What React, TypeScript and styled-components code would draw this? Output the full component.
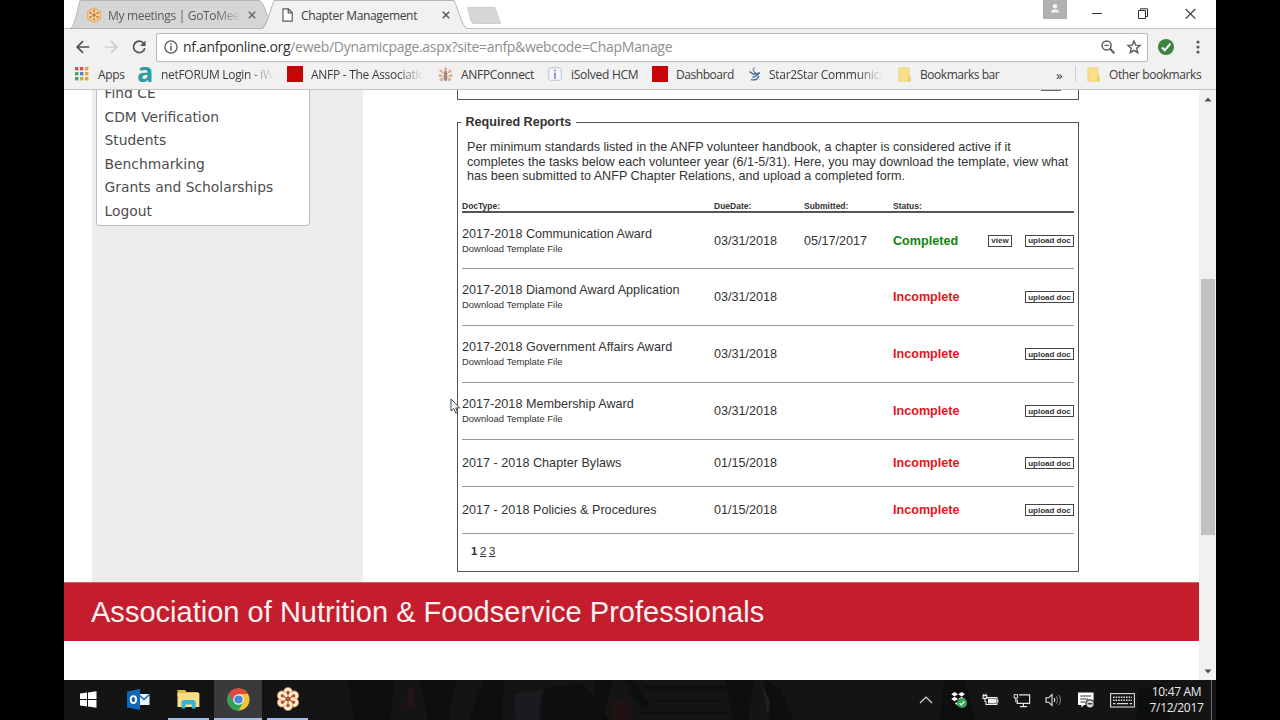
import React from 'react';
import styled, { createGlobalStyle, css } from 'styled-components';

const Global = createGlobalStyle`
  * { box-sizing: border-box; }
  body { margin: 0; background: #000; overflow: hidden; }
  svg { display: block; flex: none; }
`;

const ui = `'Open Sans', 'Noto Sans', sans-serif`;
const arial = `'Liberation Sans', Arial, sans-serif`;

const Desktop = styled.div`
  position: relative;
  width: 1152px;
  height: 720px;
  margin: 0 64px;
  background: #fff;
  display: flex;
  flex-direction: column;
  overflow: hidden;
`;

/* ---------- Browser frame ---------- */

const TabStrip = styled.header`
  height: 29px;
  flex: none;
  display: flex;
  padding-left: 6px;
  background: linear-gradient(#c4c4c4, #c4c4c4) bottom / 100% 1px no-repeat #fff;
`;

const TabShell = styled.div<{ $w: number; $overlap?: number; $front?: boolean }>`
  position: relative;
  width: ${p => p.$w}px;
  height: 29px;
  flex: none;
  margin-left: ${p => -(p.$overlap ?? 0)}px;
  z-index: ${p => (p.$front ? 2 : 1)};
`;

const TabShape = styled.svg`
  position: absolute;
  inset: 0;
`;

const TabBody = styled.div<{ $left: number; $gap: number }>`
  position: relative;
  height: 30px;
  display: flex;
  align-items: center;
  padding-left: ${p => p.$left}px;
  gap: ${p => p.$gap}px;
`;

const Label = styled.span<{ $size: number; $track?: number; $w?: number; $fade?: boolean; $color?: string }>`
  font: ${p => p.$size}px/20px ${ui};
  letter-spacing: ${p => p.$track ?? 0}px;
  color: ${p => p.$color ?? '#3c3c3c'};
  white-space: nowrap;
  flex: none;
  padding-top: 1px;
  ${p => p.$w && css`width: ${p.$w}px; overflow: hidden;`}
  ${p => p.$fade && css`mask-image: linear-gradient(90deg, #000 calc(100% - 26px), transparent);`}
`;

const NewTab = styled.svg`
  margin: 7px 0 0 -2px;
`;

const WindowControls = styled.div`
  margin-left: auto;
  display: flex;
  align-items: flex-start;
`;

const Profile = styled.div`
  width: 24px;
  height: 19px;
  background: #b1b1b1;
  display: flex;
  justify-content: center;
  margin-right: 25px;
`;

const ControlIcon = styled.svg<{ $mr: number }>`
  margin: 7px ${p => p.$mr}px 0 0;
`;

const Toolbar = styled.div`
  height: 33px;
  flex: none;
  background: #f1f1f1;
  display: flex;
  align-items: center;
  padding: 3px 0 0 11px;
`;

const NavIcons = styled.div`
  display: flex;
  gap: 12px;
  width: 81px;
`;

const Omnibox = styled.div`
  width: 992px;
  height: 29px;
  border: 1px solid #b9b9b9;
  border-radius: 2px;
  background: #fff;
  display: flex;
  align-items: center;
  padding: 0 5px 0 6px;
`;

const Url = styled.div`
  font: 14px/26px ${ui};
  letter-spacing: -0.31px;
  color: #8e8e8e;
  margin-left: 4px;
  flex: 1;
  white-space: nowrap;
`;

const UrlHost = styled.span`
  color: #2f2f2f;
`;

const OmniIcons = styled.div`
  display: flex;
  gap: 10px;
`;

const ToolbarActions = styled.div`
  display: flex;
  align-items: center;
  gap: 22px;
  margin-left: 10px;
`;

const Bookmarks = styled.nav`
  height: 28px;
  flex: none;
  background: #f1f1f1;
  border-bottom: 1px solid #c2c2c2;
  display: grid;
  grid-template-columns: 62px 150px 151px 110px 104px 97px 149px 158px 19px 12px 120px;
  padding: 0 0 3px 11px;
  align-items: center;
`;

const Bookmark = styled.div`
  display: flex;
  align-items: center;
  height: 24px;
`;

const BookmarkIcon = styled.span<{ $w: number }>`
  width: ${p => p.$w}px;
  flex: none;
`;

const BarDivider = styled.span`
  width: 1px;
  height: 16px;
  background: #cfcfcf;
`;

/* ---------- Web page ---------- */

const Viewport = styled.div`
  height: 590px;
  flex: none;
  display: flex;
`;

const Page = styled.div`
  width: 1135px;
  display: flex;
  flex-direction: column;
`;

const Columns = styled.div`
  height: 492px;
  display: flex;
  padding-left: 28px;
`;

const Sidebar = styled.aside`
  width: 271px;
  background: #ededed;
  padding-left: 4px;
`;

const SideMenu = styled.ul`
  list-style: none;
  margin: 0;
  width: 214px;
  height: 136px;
  overflow: hidden;
  background: #fff;
  border: 1px solid #bdbdbd;
  border-top: 0;
  border-radius: 0 0 4px 4px;
  padding: 0 0 0 7.5px;
`;

const SideItem = styled.li`
  font: 13.85px/23.6px 'DejaVu Sans', Verdana, sans-serif;
  color: #4c4c4c;
  white-space: nowrap;
  &:first-child { margin-top: -8px; }
`;

const Main = styled.main`
  width: 622px;
  margin-left: 94px;
  font-family: ${arial};
  color: #333;
`;

const PreviousPanel = styled.section`
  height: 10px;
  border: 1px solid #555;
  border-top: 0;
  display: flex;
  justify-content: flex-end;
  padding-right: 17px;
  margin-bottom: 22px;
`;

const CutButton = styled.span`
  width: 20px;
  height: 1px;
  background: #666;
`;

const Panel = styled.section`
  height: 450px;
  border: 1px solid #555;
  padding: 0 4px;
`;

const Legend = styled.h2`
  width: 115px;
  height: 16px;
  margin: -9px 0 0 -1px;
  padding-left: 4.5px;
  background: #fff;
  font: bold 12.6px/17px ${arial};
  white-space: nowrap;
`;

const Intro = styled.p`
  margin: 10px 0 16.5px 5px;
  font-size: 12.6px;
  line-height: 14.5px;
`;

const IntroLine = styled.span`
  display: block;
  white-space: nowrap;
`;

const gridColumns = css`
  display: grid;
  grid-template-columns: 252px 90px 89px 95px 37px 49px;
`;

const HeadRow = styled.div`
  ${gridColumns}
  height: 13px;
  border-bottom: 2px solid #555;
  font: bold 8.5px/13px ${arial};
`;

const Row = styled.div<{ $h: number }>`
  ${gridColumns}
  height: ${p => p.$h}px;
  border-bottom: 1px solid #999;
  align-items: center;
  font-size: 12.6px;
`;

const DocTitle = styled.div`
  line-height: 16px;
  letter-spacing: 0.02px;
  white-space: nowrap;
`;

const Template = styled.div`
  font-size: 9.45px;
  line-height: 14px;
`;

const Status = styled.strong<{ $done: boolean }>`
  color: ${p => (p.$done ? '#0b870b' : '#e8141c')};
`;

const ViewCell = styled.div`
  display: flex;
`;

const SmallButton = styled.button<{ $w: number }>`
  width: ${p => p.$w}px;
  height: 12px;
  padding: 0;
  border: 1px solid #444;
  background: #fff;
  color: #333;
  font: bold 8px/9px ${arial};
  white-space: nowrap;
`;

const Pager = styled.div`
  display: flex;
  gap: 2.7px;
  padding: 10px 0 0 9px;
  font-size: 11.4px;
  line-height: 15px;
`;

const PageLink = styled.span`
  text-decoration: underline;
`;

const Banner = styled.footer`
  height: 59px;
  background: #c41e2e;
  border-top: 1px solid #d0606c;
  padding-left: 27px;
  font: 29px/59px ${arial};
  letter-spacing: 0.02px;
  color: #fdf1f1;
  white-space: nowrap;
`;

const ScrollTrack = styled.div`
  width: 17px;
  background: #f1f1f1;
  display: flex;
  flex-direction: column;
  align-items: center;
  padding: 7px 0 6px;
`;

const Thumb = styled.div`
  width: 14px;
  height: 256px;
  margin: 177px 0 auto;
  background: #c1c1c1;
`;

/* ---------- Taskbar ---------- */

const Taskbar = styled.div`
  height: 40px;
  flex: none;
  display: flex;
  position: relative;
  background: #131413;
`;

const Wallpaper = styled.svg`
  position: absolute;
  inset: 0;
`;

const TaskButton = styled.div<{ $w: number; $active?: boolean; $open?: boolean; $mr?: number }>`
  position: relative;
  width: ${p => p.$w}px;
  height: 40px;
  margin-right: ${p => p.$mr ?? 0}px;
  display: flex;
  align-items: center;
  justify-content: center;
  background: ${p => (p.$active ? '#3a3a3a' : 'transparent')};
  border-bottom: ${p => (p.$active || p.$open ? '2px solid #a6bce8' : '2px solid transparent')};
`;

const Tray = styled.div`
  position: relative;
  margin-left: auto;
  height: 40px;
  display: grid;
  grid-template-columns: 33px 33px 31px 31px 33px 31px 42px 67px 6px;
  align-items: center;
  justify-items: center;
`;

const Clock = styled.div`
  font: 12px/16px ${ui};
  letter-spacing: -0.32px;
  color: #ececec;
  text-align: center;
  white-space: nowrap;
  padding-bottom: 1px;
`;

const ShowDesktop = styled.span`
  width: 1px;
  height: 40px;
  background: #6a6a6a;
  justify-self: start;
  margin-left: 1px;
`;

const Cursor = styled.svg`
  position: absolute;
  left: 386px;
  top: 398px;
`;

/* ---------- Icons ---------- */

const petals = [0, 60, 120, 180, 240, 300];

const GoToIcon = ({ size, bright }: { size: number; bright?: boolean }) => (
  <svg width={size} height={size} viewBox="0 0 24 24">
    {bright ? (
      <g fill="#fff3dc" stroke="#d9763a" strokeWidth="0.8">
        {petals.map(a => <circle key={a} cx="12" cy="5" r="4.6" transform={`rotate(${a} 12 12)`} />)}
      </g>
    ) : (
      <path d="M12 1.2 21.5 6.6V17.4L12 22.8 2.5 17.4V6.6Z" fill="#f6dcae" stroke="#e6ac68" strokeWidth="2" strokeLinejoin="round" />
    )}
    <circle cx="12" cy="12" r="7" fill={bright ? '#fff3dc' : '#f6dcae'} />
    <g fill={bright ? '#b5521f' : '#cf8046'} stroke={bright ? '#b5521f' : '#cf8046'}>
      {petals.map(a => (
        <g key={a} transform={`rotate(${a} 12 12)`}>
          <path d="M12 12V6.5" strokeWidth="1" />
          <circle cx="12" cy="5.6" r="1.5" strokeWidth="0.6" />
        </g>
      ))}
      <circle cx="12" cy="12" r="2" />
    </g>
  </svg>
);

const Close = ({ color }: { color: string }) => (
  <svg width="8" height="8" viewBox="0 0 8 8" stroke={color} strokeWidth="1.4"><path d="M.8.8 7.2 7.2M7.2.8.8 7.2" /></svg>
);

const FileIcon = () => (
  <svg width="11" height="14" viewBox="0 0 11 14" fill="#fff" stroke="#5c5c5c" strokeWidth="1.2"><path d="M1 .8H6.4L10.2 4.6V13.2H1ZM6.2 1V4.8H10" /></svg>
);

const Back = ({ color, flip }: { color: string; flip?: boolean }) => (
  <svg width="16" height="16" viewBox="0 0 16 16" fill="none" stroke={color} strokeWidth="1.7">
    <path d="M14.3 8H2.5M8 2.2 2.2 8 8 13.8" transform={flip ? 'matrix(-1 0 0 1 16 0)' : undefined} />
  </svg>
);

const Reload = () => (
  <svg width="16" height="16" viewBox="0 0 16 16" fill="none" stroke="#555" strokeWidth="1.7">
    <path d="M12.7 4.4A5.7 5.7 0 1 0 13.8 9" /><path d="M14.6 1.4V7H9Z" fill="#555" stroke="none" />
  </svg>
);

const Info = () => (
  <svg width="16" height="16" viewBox="0 0 16 16" fill="none" stroke="#5a5a5a" strokeWidth="1.3">
    <circle cx="8" cy="8" r="6.1" /><path d="M8 7V11.6M8 4.3V5.8" strokeWidth="1.5" />
  </svg>
);

const ZoomOut = () => (
  <svg width="16" height="16" viewBox="0 0 16 16" fill="none" stroke="#5a5a5a" strokeWidth="1.5">
    <circle cx="6.6" cy="6.4" r="4.5" /><path d="M10 9.8 14.3 14.2" strokeWidth="2" /><path d="M4.4 6.4H8.8" strokeWidth="1.2" />
  </svg>
);

const Star = () => (
  <svg width="16" height="16" viewBox="0 0 16 16" fill="none" stroke="#5a5a5a" strokeWidth="1.4">
    <path d="M8 2 9.7 6.1 14.1 6.4 10.7 9.3 11.8 13.7 8 11.3 4.2 13.7 5.3 9.3 1.9 6.4 6.3 6.1Z" />
  </svg>
);

const CheckBadge = () => (
  <svg width="16" height="16" viewBox="0 0 16 16">
    <circle cx="8" cy="8" r="8" fill="#3b8440" />
    <path d="M4 8.6 6.8 11.3 12.4 4.6" fill="none" stroke="#fff" strokeWidth="2.1" />
  </svg>
);

const Dots = () => (
  <svg width="4" height="14" viewBox="0 0 4 14" fill="#5a5a5a"><circle cx="2" cy="2" r="1.6" /><circle cx="2" cy="7" r="1.6" /><circle cx="2" cy="12" r="1.6" /></svg>
);

const appColors = ['#d9534a', '#d9534a', '#dca83a', '#4aa564', '#5b7fd0', '#dca83a', '#4aa564', '#dca83a', '#dca83a'];
const AppsIcon = () => (
  <svg width="14" height="14" viewBox="0 0 14 14">
    {appColors.map((c, i) => <rect key={i} x={(i % 3) * 5} y={Math.floor(i / 3) * 5} width="3.4" height="3.4" fill={c} />)}
  </svg>
);

const LetterA = styled.span`
  display: block;
  width: 15px;
  height: 20px;
  font: bold 27px/16px 'Open Sans', sans-serif;
  color: #2a9da3;
`;

const RedSquare = styled.span`
  display: block;
  width: 16px;
  height: 16px;
  background: #c80408;
`;

const ConnectIcon = () => (
  <svg width="15" height="15" viewBox="0 0 15 15">
    <g fill="#e9b08e">
      <circle cx="3" cy="4" r="1.6" /><circle cx="12" cy="4" r="1.6" /><circle cx="2" cy="8.5" r="1.6" /><circle cx="13" cy="8.5" r="1.6" />
      <circle cx="3.5" cy="12.5" r="1.8" /><circle cx="11.5" cy="12.5" r="1.8" /><circle cx="7.5" cy="2" r="1.7" />
    </g>
    <path d="M3 4.5 7.5 8 12 4.5M2 9H13M4 12.5 7.5 9 11 12.5" stroke="#c9a592" fill="none" />
    <rect x="6" y="3.5" width="3" height="10.5" rx="1.5" fill="#a5857a" />
  </svg>
);

const ISolvedIcon = () => (
  <svg width="14" height="14" viewBox="0 0 14 14" fill="none" stroke="#b6c6dc" strokeWidth="1">
    <rect x=".7" y=".7" width="12.6" height="12.6" rx="2" fill="#f5f7fa" /><path d="M7 5.6V12M7 2.6V4.3" stroke="#6d87ad" strokeWidth="1.5" />
  </svg>
);

const Star2StarIcon = () => (
  <svg width="12" height="14" viewBox="0 0 12 14" fill="none" stroke="#3d6894" strokeWidth="1.3">
    <path d="M5.6.4C4 1.8 3.8 3.4 5.2 4.6" stroke="#7d9ab8" />
    <path d="M.6 4.6 4.6 7.2 11 6M5 4.6 7.4 7M3.4 10.4C6.8 9.6 8.6 8.6 9.4 6.6M2 12.6C6 13.6 9.4 12.4 9.6 8.6" />
  </svg>
);

const Folder = () => (
  <svg width="13" height="15" viewBox="0 0 13 15"><path d="M.8.8H11.2V9.8H12.4V14.2H.8Z" fill="#fbe08b" stroke="#eecf73" strokeWidth=".8" /><path d="M9.9 10.2H12.2V14H9.9Z" fill="#f2cd62" /></svg>
);

const Arrow = ({ down }: { down?: boolean }) => (
  <svg width="8" height="5" viewBox="0 0 8 5"><path d={down ? 'M.5.5H7.5L4 4.5Z' : 'M.5 4.5H7.5L4 .5Z'} fill="#505050" /></svg>
);

const WindowsIcon = () => (
  <svg width="17" height="17" viewBox="0 0 17 17" fill="#fff"><path d="M0 2.6 7 1.6V8H0ZM8 1.4 16.5.2V8H8ZM0 9H7V15.4L0 14.4ZM8 9H16.5V16.8L8 15.6Z" /></svg>
);

const OutlookIcon = () => (
  <svg width="23" height="21" viewBox="0 0 23 21">
    <rect x="11" y="5" width="11.5" height="11" fill="#e9f1fa" />
    <path d="M12 6 17 10.5 22.5 5.5" fill="none" stroke="#1466b3" strokeWidth="1.5" />
    <path d="M0 2.4 13 0V21L0 18.6Z" fill="#0f68b8" />
    <ellipse cx="6.4" cy="10.6" rx="2.7" ry="3.5" fill="none" stroke="#fff" strokeWidth="1.8" />
  </svg>
);

const ExplorerIcon = () => (
  <svg width="23" height="20" viewBox="0 0 23 20">
    <path d="M.5 1H8L9.5 3H21V7H.5Z" fill="#e3b94f" />
    <path d="M.5 4H22.4V18H.5Z" fill="#fbdf86" />
    <path d="M4.5 19.4V12.6L6.4 11H16.8L18.7 12.6V19.4H14.8V15.4H8.4V19.4Z" fill="#35b4d6" />
  </svg>
);

const ChromeIcon = () => (
  <svg width="23" height="23" viewBox="0 0 24 24">
    <circle cx="12" cy="12" r="11.5" fill="#f3c63a" />
    <path d="M2.04 6.25A11.5 11.5 0 0 0 12 23.5L17 14.9 12 12Z" fill="#2fa257" />
    <path d="M2.04 6.25 7.1 14.9 12 12 12 6.3H21.96A11.5 11.5 0 0 0 2.04 6.25Z" fill="#dd4b3e" />
    <circle cx="12" cy="12" r="5.5" fill="#f4f4f4" /><circle cx="12" cy="12" r="4.3" fill="#4a86e0" />
  </svg>
);

const DropboxIcon = () => (
  <svg width="18" height="18" viewBox="0 0 18 18">
    <path d="M4.6 1 8 3.2 4.6 5.4 1.2 3.2ZM11.6 1 15 3.2 11.6 5.4 8.2 3.2ZM4.6 5.8 8 8 4.6 10.2 1.2 8ZM11.6 5.8 15 8 11.6 10.2 8.2 8ZM8 10.4 11 12.4 8 14.6 4.8 12.4Z" fill="#fff" />
    <circle cx="12" cy="12" r="5" fill="#2fa84f" /><path d="M9.6 12.2 11.4 13.9 14.4 10.4" stroke="#fff" strokeWidth="1.3" fill="none" />
  </svg>
);

const BatteryIcon = () => (
  <svg width="17" height="14" viewBox="0 0 17 14" fill="none" stroke="#eee" strokeWidth="1.1">
    <path d="M5 4.5H15V11.5H4V8" /><path d="M6.5 6H13.6V10H6.5Z" fill="#eee" /><path d="M15.8 6.5V9.5" />
    <path d="M1 2.6H4.8V5.4H1ZM1.8.8V2.6M4 .8V2.6M2.9 5.4V9" />
  </svg>
);

const NetworkIcon = () => (
  <svg width="18" height="15" viewBox="0 0 18 15" fill="none" stroke="#e6e6e6" strokeWidth="1.2">
    <path d="M6 1.8H16.6V10.4H4.2V6.5M10.4 10.4V13.4M7 13.6H14" /><path d="M1.2 1.6H4.6V5H1.2ZM2.8 5V9.2" strokeWidth="1" />
  </svg>
);

const VolumeIcon = () => (
  <svg width="18" height="14" viewBox="0 0 18 14" fill="none" stroke="#e6e6e6" strokeWidth="1.1">
    <path d="M1 4.8H3.6L7 1.6V12.4L3.6 9.2H1Z" /><path d="M9 5C9.8 6 9.8 8 9 9" />
    <path d="M11.2 3.4C12.8 5.4 12.8 8.6 11.2 10.6M13.6 1.8C16.2 4.6 16.2 9.4 13.6 12.2" stroke="#777" />
  </svg>
);

const NoteIcon = () => (
  <svg width="18" height="17" viewBox="0 0 18 17">
    <path d="M1 .6H16.6V13H7L4.4 15.6V13H1Z" fill="#fff" /><path d="M3.4 4H14M3.4 7H11M3.4 10H8.5" stroke="#333" strokeWidth="1.2" />
    <circle cx="13" cy="11.8" r="4.6" fill="#131413" /><circle cx="13" cy="11.8" r="3.6" fill="#d8d8d8" /><path d="M10.6 11.8H15.4" stroke="#222" strokeWidth="1.2" />
  </svg>
);

const KeyboardIcon = () => (
  <svg width="25" height="15" viewBox="0 0 25 15" fill="none" stroke="#dcdcdc" strokeWidth="1.1">
    <rect x=".6" y=".6" width="23.8" height="13.4" />
    <path d="M3 4.2H22M3 7.2H22" strokeDasharray="1.6 1" strokeWidth="1.4" /><path d="M3 10.6H5.4M7 10.6H18M19.6 10.6H22" strokeWidth="1.3" />
  </svg>
);

/* ---------- Content ---------- */

const menu = ['Find CE', 'CDM Verification', 'Students', 'Benchmarking', 'Grants and Scholarships', 'Logout'];

const reports = [
  { title: '2017-2018 Communication Award', template: true, due: '03/31/2018', submitted: '05/17/2017', h: 56 },
  { title: '2017-2018 Diamond Award Application', template: true, due: '03/31/2018', h: 57 },
  { title: '2017-2018 Government Affairs Award', template: true, due: '03/31/2018', h: 57 },
  { title: '2017-2018 Membership Award', template: true, due: '03/31/2018', h: 57 },
  { title: '2017 - 2018 Chapter Bylaws', due: '01/15/2018', h: 47 },
  { title: '2017 - 2018 Policies & Procedures', due: '01/15/2018', h: 47 },
];

interface BookmarkDef { icon: React.ReactNode; slot: number; text: string; w?: number; track?: number }

const bookmarks: BookmarkDef[] = [
  { icon: <AppsIcon />, slot: 23, text: 'Apps', track: -0.3 },
  { icon: <LetterA>a</LetterA>, slot: 24, text: 'netFORUM Login - iWeb', w: 113, track: -0.3 },
  { icon: <RedSquare />, slot: 24, text: 'ANFP - The Association', w: 113, track: -0.28 },
  { icon: <ConnectIcon />, slot: 23, text: 'ANFPConnect', track: -0.3 },
  { icon: <ISolvedIcon />, slot: 23, text: 'iSolved HCM', track: -0.26 },
  { icon: <RedSquare />, slot: 24, text: 'Dashboard', track: -0.45 },
  { icon: <Star2StarIcon />, slot: 20, text: 'Star2Star Communications', w: 114, track: -0.3 },
  { icon: <Folder />, slot: 22, text: 'Bookmarks bar', track: -0.46 },
];

const Chrome = () => (
  <>
    <TabStrip>
      <TabShell $w={200}>
        <TabShape width="200" height="29">
          <path d="M0 28.5C4 27 5 20 10 .5H189C194 2 195 12 199 18L192 28.5Z" fill="#d5d5d5" stroke="#b5b5b5" />
        </TabShape>
        <TabBody $left={16} $gap={6}>
          <GoToIcon size={16} />
          <Label $size={12} $track={-0.32} $w={134} $fade $color="#5a5a5a">My meetings | GoToMeeting</Label>
          <Close color="#666" />
        </TabBody>
      </TabShell>
      <TabShell $w={206} $overlap={8} $front>
        <TabShape width="206" height="29">
          <path d="M0 29C5 27 8 10 12 .5H192C196 8 200 27 205 29Z" fill="#f1f1f1" />
          <path d="M0 28.5C5 27 8 10 12 .5H192C196 8 200 27 205 28.5" fill="none" stroke="#b5b5b5" />
        </TabShape>
        <TabBody $left={20} $gap={8}>
          <FileIcon />
          <Label $size={12} $track={-0.34} $w={133}>Chapter Management</Label>
          <Close color="#555" />
        </TabBody>
      </TabShell>
      <NewTab width="36" height="18"><path d="M1.5.5H29L34.5 16.5H8Q6 16.5 5 14Z" fill="#d6d6d6" stroke="#cdcdcd" /></NewTab>
      <WindowControls>
        <Profile>
          <svg width="12" height="16" viewBox="0 0 12 16" fill="#f4f4f4"><circle cx="6" cy="6.2" r="2.2" /><path d="M1.8 12.4C2 9.8 4 9.4 6 9.4S10 9.8 10.2 12.4Z" /></svg>
        </Profile>
        <ControlIcon $mr={36} width="10" height="14"><path d="M0 6.5H10" stroke="#333" /></ControlIcon>
        <ControlIcon $mr={37} width="10" height="14" fill="none" stroke="#333"><path d="M.5 3.5H7.5V11.5H.5ZM2.5 3.5V1.8H9.5V9.5H7.5" /></ControlIcon>
        <ControlIcon $mr={20} width="11" height="14" stroke="#333" strokeWidth="1.1"><path d="M.7 2 10.3 11.6M10.3 2 .7 11.6" /></ControlIcon>
      </WindowControls>
    </TabStrip>
    <Toolbar>
      <NavIcons><Back color="#505050" /><Back color="#cfcfcf" flip /><Reload /></NavIcons>
      <Omnibox>
        <Info />
        <Url><UrlHost>nf.anfponline.org</UrlHost>/eweb/Dynamicpage.aspx?site=anfp&amp;webcode=ChapManage</Url>
        <OmniIcons><ZoomOut /><Star /></OmniIcons>
      </Omnibox>
      <ToolbarActions><CheckBadge /><Dots /></ToolbarActions>
    </Toolbar>
    <Bookmarks>
      {bookmarks.map(b => (
        <Bookmark key={b.text}>
          <BookmarkIcon $w={b.slot}>{b.icon}</BookmarkIcon>
          <Label $size={12} $track={b.track} $w={b.w} $fade={!!b.w}>{b.text}</Label>
        </Bookmark>
      ))}
      <Label $size={13}>»</Label>
      <BarDivider />
      <Bookmark>
        <BookmarkIcon $w={22}><Folder /></BookmarkIcon>
        <Label $size={12} $track={-0.42}>Other bookmarks</Label>
      </Bookmark>
    </Bookmarks>
  </>
);

const Reports = () => (
  <Panel>
    <Legend>Required Reports</Legend>
    <Intro>
      <IntroLine>Per minimum standards listed in the ANFP volunteer handbook, a chapter is considered active if it</IntroLine>
      <IntroLine>completes the tasks below each volunteer year (6/1-5/31). Here, you may download the template, view what</IntroLine>
      <IntroLine>has been submitted to ANFP Chapter Relations, and upload a completed form.</IntroLine>
    </Intro>
    <HeadRow><span>DocType:</span><span>DueDate:</span><span>Submitted:</span><span>Status:</span></HeadRow>
    {reports.map(r => (
      <Row key={r.title} $h={r.h}>
        <div>
          <DocTitle>{r.title}</DocTitle>
          {r.template && <Template>Download Template File</Template>}
        </div>
        <span>{r.due}</span>
        <span>{r.submitted}</span>
        <Status $done={!!r.submitted}>{r.submitted ? 'Completed' : 'Incomplete'}</Status>
        <ViewCell>{r.submitted && <SmallButton $w={24}>view</SmallButton>}</ViewCell>
        <SmallButton $w={49}>upload doc</SmallButton>
      </Row>
    ))}
    <Pager><b>1</b><PageLink>2</PageLink><PageLink>3</PageLink></Pager>
  </Panel>
);

const Task = () => (
  <Taskbar>
    <Wallpaper width="1152" height="40">
      <g fill="#0d0e0e">
        <path d="M284 0H330L326 40H290Z M356 0H392L384 40H364Z M420 0H440L438 40H405Z M480 8 520 4 545 40H478Z M530 0H548L540 36H532Z M560 0 570 0 586 26 578 28Z M662 0H690L684 40H668Z M700 0 716 8 730 40H705Z M880 0H900L912 40H876Z M1075 10 1096 4 1108 40H1072Z" />
        <path d="M580 6H662V9H580ZM590 20H660V22H590ZM574 32H665V34H574Z" />
      </g>
      <path d="M548 20H566V40H548Z" fill="#1f1213" /><path d="M450 14 478 10 474 40H452Z" fill="#191b1e" />
      <path d="M344 8H350V28H342Z" fill="#221314" /><path d="M698 4 706 22 704 38Z" fill="#22201f" />
    </Wallpaper>
    <TaskButton $w={48}><WindowsIcon /></TaskButton>
    <TaskButton $w={52} $mr={4}><OutlookIcon /></TaskButton>
    <TaskButton $w={41} $mr={5} $open><ExplorerIcon /></TaskButton>
    <TaskButton $w={48} $mr={5} $active><ChromeIcon /></TaskButton>
    <TaskButton $w={41} $open><GoToIcon size={24} bright /></TaskButton>
    <Tray>
      <svg width="14" height="8" viewBox="0 0 14 8" fill="none" stroke="#ddd" strokeWidth="1.2"><path d="M1 7 7 1 13 7" /></svg>
      <DropboxIcon />
      <BatteryIcon />
      <NetworkIcon />
      <VolumeIcon />
      <NoteIcon />
      <KeyboardIcon />
      <Clock>10:47 AM<br />7/12/2017</Clock>
      <ShowDesktop />
    </Tray>
  </Taskbar>
);

export default function App() {
  return (
    <>
      <Global />
      <Desktop>
        <Chrome />
        <Viewport>
          <Page>
            <Columns>
              <Sidebar>
                <SideMenu>{menu.map(m => <SideItem key={m}>{m}</SideItem>)}</SideMenu>
              </Sidebar>
              <Main>
                <PreviousPanel><CutButton /></PreviousPanel>
                <Reports />
              </Main>
            </Columns>
            <Banner>Association of Nutrition &amp; Foodservice Professionals</Banner>
          </Page>
          <ScrollTrack><Arrow /><Thumb /><Arrow down /></ScrollTrack>
        </Viewport>
        <Task />
        <Cursor width="11" height="17" viewBox="0 0 11 17"><path d="M1 1V13L3.8 10.5 5.8 15.2 7.6 14.4 5.7 9.9H9.6Z" fill="#fff" stroke="#444" /></Cursor>
      </Desktop>
    </>
  );
}
